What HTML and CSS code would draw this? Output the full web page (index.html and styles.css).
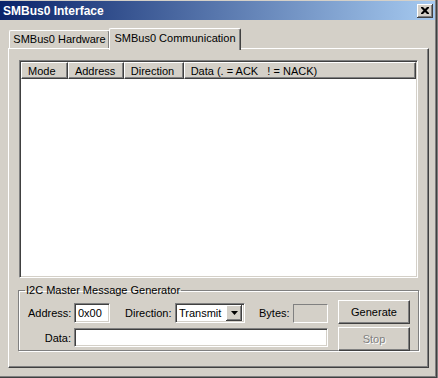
FILE: index.html
```html
<!DOCTYPE html>
<html lang="en">
<head>
  <meta charset="UTF-8" />
  <title>SMBus0 Interface</title>
  <link rel="stylesheet" href="styles.css">
</head>
<body>
  <div class="window">
    <div class="titlebar">
      <span class="title">SMBus0 Interface</span>
      <span class="close-btn">
        <svg width="8" height="7" viewBox="0 0 8 7"><path d="M0 0h2l2 2 2-2h2v1l-2.5 2.5L8 6v1H6L4 5 2 7H0V6l2.5-2.5L0 1z" fill="#000"/></svg>
      </span>
    </div>

    <div class="tabs">
      <div class="tab">SMBus0 Hardware</div>
      <div class="tab active">SMBus0 Communication</div>
    </div>

    <div class="panel">
      <div class="listview">
        <div class="list-header">
          <div class="col col-mode">Mode</div>
          <div class="col col-addr">Address</div>
          <div class="col col-dir">Direction</div>
          <div class="col col-data">Data (. = ACK&nbsp;&nbsp; ! = NACK)</div>
        </div>
      </div>

      <fieldset class="group">
        <legend>I2C Master Message Generator</legend>
        <div class="group-body">
          <div class="fields">
            <div class="row">
              <label class="lbl lbl-addr">Address:</label>
              <div class="input input-addr">0x00</div>
              <label class="lbl lbl-dir">Direction:</label>
              <div class="input select">
                <span>Transmit</span>
                <span class="arrow"><svg width="7" height="4" viewBox="0 0 7 4"><path d="M0 0h7L3.5 4z" fill="#000"/></svg></span>
              </div>
              <label class="lbl lbl-bytes">Bytes:</label>
              <div class="bytes-box"></div>
            </div>
            <div class="row">
              <label class="lbl lbl-addr">Data:</label>
              <div class="input input-data"></div>
            </div>
          </div>
          <div class="buttons">
            <button class="btn">Generate</button>
            <button class="btn disabled">Stop</button>
          </div>
        </div>
      </fieldset>
    </div>
  </div>
</body>
</html>
```

FILE: styles.css
```css
/* Classic dialog look */
body {
  margin: 0;
  background: #808080;
  font-family: "Liberation Sans", Arial, sans-serif;
  font-size: 11px;
  color: #000;
}
.window {
  width: 435px;
  height: 376px;
  background: #d4d0c8;
  border-right: 1px solid #404040;
  border-bottom: 1px solid #404040;
  box-shadow: inset -1px -1px 0 #808080;
  padding: 1px 1px 0 0;
}
.titlebar {
  height: 19px;
  display: flex;
  align-items: center;
  justify-content: space-between;
  padding: 0 2px 0 3px;
  background: linear-gradient(to right, #0a246a, #a6caf0);
}
.title {
  color: #fff;
  font-weight: bold;
  font-size: 12px;
}
.close-btn {
  width: 16px;
  height: 14px;
  box-sizing: border-box;
  background: #d4d0c8;
  display: flex;
  align-items: center;
  justify-content: center;
  box-shadow: inset -1px -1px 0 #404040, inset 1px 1px 0 #fff, inset -2px -2px 0 #808080;
}

/* Tabs */
.tabs {
  display: flex;
  align-items: flex-end;
  height: 28px;
  padding-left: 9px;
  position: relative;
  z-index: 2;
}
.tab {
  width: 101px;
  height: 18px;
  box-sizing: border-box;
  text-align: center;
  line-height: 17px;
  border: 1px solid #fff;
  border-bottom: none;
  border-right: 1px solid #404040;
  border-radius: 2px 2px 0 0;
  box-shadow: inset -1px 0 0 #808080;
  white-space: nowrap;
}
.tab.active {
  width: 132px;
  height: 22px;
  line-height: 19px;
  margin-bottom: -2px;
  margin-left: -1px;
  background: #d4d0c8;
}

.panel {
  width: 421px;
  height: 320px;
  margin-left: 8px;
  box-sizing: border-box;
  border-top: 1px solid #fff;
  border-left: 1px solid #fff;
  border-right: 1px solid #404040;
  border-bottom: 1px solid #404040;
  box-shadow: inset -1px -1px 0 #808080;
  padding: 11px 10px 0 10px;
}

/* List view */
.listview {
  height: 218px;
  box-sizing: border-box;
  background: #fff;
  border-top: 1px solid #808080;
  border-left: 1px solid #808080;
  border-right: 1px solid #fff;
  border-bottom: 1px solid #fff;
  box-shadow: inset 1px 1px 0 #404040, inset -1px -1px 0 #d4d0c8;
  padding: 1px;
}
.list-header {
  display: flex;
  height: 17px;
}
.col {
  height: 17px;
  box-sizing: border-box;
  line-height: 16px;
  padding-left: 6px;
  background: #d4d0c8;
  border-top: 1px solid #fff;
  border-left: 1px solid #fff;
  border-right: 1px solid #404040;
  border-bottom: 1px solid #404040;
  box-shadow: inset -1px -1px 0 #808080;
  white-space: nowrap;
}
.col-mode { width: 47px; }
.col-addr { width: 56px; }
.col-dir { width: 60px; }
.col-data { width: 233px; }

/* Group box */
.group {
  margin: 6px 0 0 -1px;
  width: 401px;
  height: 67px;
  box-sizing: border-box;
  border: 1px solid #808080;
  box-shadow: 1px 1px 0 #fff, inset 1px 1px 0 #fff;
  padding: 0 8px 0 9px;
}
.group legend {
  padding: 0 1px 0 1px;
  margin-left: -3px;
}
.group-body {
  display: flex;
  justify-content: space-between;
  margin-top: 4px;
}
.fields {
  display: flex;
  flex-direction: column;
  gap: 5px;
  padding-top: 3px;
}
.row {
  display: flex;
  align-items: center;
}
.lbl { white-space: nowrap; }
.lbl-addr {
  width: 43px;
  margin-right: 3px;
  text-align: right;
}
.lbl-dir { width: 47px; margin: 0 3px 0 15px; }
.lbl-bytes { width: 30px; margin: 0 4px 0 14px; }
.input {
  height: 20px;
  box-sizing: border-box;
  background: #fff;
  border-top: 1px solid #808080;
  border-left: 1px solid #808080;
  border-right: 1px solid #fff;
  border-bottom: 1px solid #fff;
  box-shadow: inset 1px 1px 0 #404040, inset -1px -1px 0 #d4d0c8;
  padding-left: 3px;
  line-height: 18px;
}
.input-addr { width: 36px; }
.select {
  width: 70px;
  display: flex;
  justify-content: space-between;
  padding-right: 2px;
  align-items: center;
}
.arrow {
  width: 16px;
  height: 16px;
  box-sizing: border-box;
  background: #d4d0c8;
  display: flex;
  align-items: center;
  justify-content: center;
  box-shadow: inset -1px -1px 0 #404040, inset 1px 1px 0 #fff, inset -2px -2px 0 #808080;
}
.bytes-box {
  width: 35px;
  height: 19px;
  box-sizing: border-box;
  border-top: 1px solid #808080;
  border-left: 1px solid #808080;
  border-right: 1px solid #fff;
  border-bottom: 1px solid #fff;
}
.input-data { width: 254px; height: 19px; }
.buttons {
  display: flex;
  flex-direction: column;
  gap: 3px;
}
.btn {
  width: 72px;
  height: 24px;
  font-family: inherit;
  font-size: 11px;
  background: #d4d0c8;
  border: none;
  border-right: 1px solid #404040;
  border-bottom: 1px solid #404040;
  border-top: 1px solid #fff;
  border-left: 1px solid #fff;
  box-shadow: inset -1px -1px 0 #808080;
  padding: 0;
  color: #000;
}
.btn.disabled {
  color: #808080;
  text-shadow: 1px 1px 0 #fff;
}
```
